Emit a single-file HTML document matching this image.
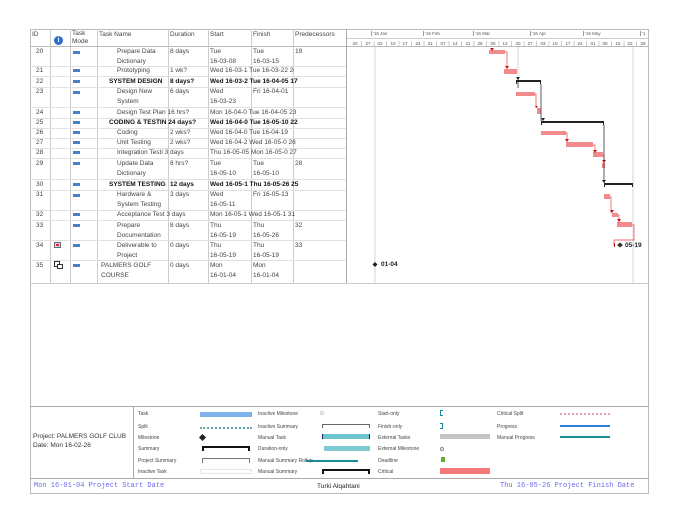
<!DOCTYPE html>
<html><head><meta charset="utf-8"><style>
*{margin:0;padding:0;box-sizing:border-box}
body{width:680px;height:525px;background:#fff;position:relative;font-family:"Liberation Sans",sans-serif;font-size:6.5px;color:#444;overflow:hidden}
.a{position:absolute}
.vl{position:absolute;width:1px;background:#ccc}
.hl{position:absolute;height:1px;background:#e0e0e0}
.t{position:absolute;line-height:10px;white-space:nowrap;overflow:hidden}
.b{font-weight:bold;color:#111}
.mode{position:absolute;width:7px;height:3px;background:#4a7fcc}
.lg{position:absolute;font-size:5px;color:#444}
</style></head><body>
<div class="a" style="left:30px;top:29px;width:619px;height:465px;border:1px solid #bbb"></div>
<div class="a" style="left:30px;top:46px;width:619px;height:1px;background:#bbb"></div>
<div class="vl" style="left:50px;top:29px;height:254px"></div>
<div class="vl" style="left:70px;top:29px;height:254px"></div>
<div class="vl" style="left:97px;top:29px;height:254px"></div>
<div class="vl" style="left:168px;top:29px;height:254px"></div>
<div class="vl" style="left:208px;top:29px;height:254px"></div>
<div class="vl" style="left:251px;top:29px;height:254px"></div>
<div class="vl" style="left:293px;top:29px;height:254px"></div>
<div class="vl" style="left:346px;top:29px;height:254px;background:#aaa"></div>
<div class="a" style="left:30px;top:283px;width:619px;height:1px;background:#ccc"></div>
<div class="t" style="left:32px;top:30px">ID</div>
<div class="a" style="left:54px;top:36px;width:9px;height:9px;border-radius:50%;background:#2a6fc9;color:#fff;font-size:7px;font-weight:bold;text-align:center;line-height:9px">i</div>
<div class="t" style="left:72px;top:30px;line-height:8px">Task<br>Mode</div>
<div class="t" style="left:99px;top:30px">Task Name</div>
<div class="t" style="left:170px;top:30px">Duration</div>
<div class="t" style="left:210px;top:30px">Start</div>
<div class="t" style="left:253px;top:30px">Finish</div>
<div class="t" style="left:295px;top:30px">Predecessors</div>

<div class="hl" style="left:30px;top:66px;width:316px"></div>
<div class="hl" style="left:30px;top:76px;width:316px"></div>
<div class="hl" style="left:30px;top:87px;width:316px"></div>
<div class="hl" style="left:30px;top:107px;width:316px"></div>
<div class="hl" style="left:30px;top:118px;width:316px"></div>
<div class="hl" style="left:30px;top:128px;width:316px"></div>
<div class="hl" style="left:30px;top:138px;width:316px"></div>
<div class="hl" style="left:30px;top:148px;width:316px"></div>
<div class="hl" style="left:30px;top:158px;width:316px"></div>
<div class="hl" style="left:30px;top:179px;width:316px"></div>
<div class="hl" style="left:30px;top:190px;width:316px"></div>
<div class="hl" style="left:30px;top:210px;width:316px"></div>
<div class="hl" style="left:30px;top:220px;width:316px"></div>
<div class="hl" style="left:30px;top:240px;width:316px"></div>
<div class="hl" style="left:30px;top:260px;width:316px"></div>

<div class="t" style="left:36px;top:47px">20</div><div class="mode" style="left:73px;top:51px"></div>
<div class="t" style="left:117px;top:47px;line-height:10px">Prepare Data<br>Dictionary</div><div class="t" style="left:170px;top:47px">8 days</div><div class="t" style="left:210px;top:47px">Tue<br>16-03-08</div><div class="t" style="left:253px;top:47px">Tue<br>16-03-15</div><div class="t" style="left:295px;top:47px">19</div>

<div class="t" style="left:36px;top:66px">21</div><div class="mode" style="left:73px;top:69px"></div>
<div class="t" style="left:117px;top:66px">Prototyping</div><div class="t" style="left:170px;top:66px">1 wk?</div><div class="t" style="left:210px;top:66px;width:84px">Wed 16-03-1 Tue 16-03-22 20</div>

<div class="t" style="left:36px;top:77px">22</div><div class="mode" style="left:73px;top:80px"></div>
<div class="t b" style="left:109px;top:77px">SYSTEM DESIGN</div><div class="t b" style="left:170px;top:77px">8 days?</div><div class="t b" style="left:210px;top:77px;width:110px">Wed 16-03-2 Tue 16-04-05 17</div>

<div class="t" style="left:36px;top:87px">23</div><div class="mode" style="left:73px;top:91px"></div>
<div class="t" style="left:117px;top:87px">Design New<br>System</div><div class="t" style="left:170px;top:87px">6 days</div><div class="t" style="left:210px;top:87px">Wed<br>16-03-23</div><div class="t" style="left:253px;top:87px">Fri 16-04-01</div>

<div class="t" style="left:36px;top:108px">24</div><div class="mode" style="left:73px;top:111px"></div>
<div class="t" style="left:117px;top:108px;width:92px">Design Test Plan 16 hrs?</div><div class="t" style="left:210px;top:108px;width:110px">Mon 16-04-0 Tue 16-04-05 23</div>

<div class="t" style="left:36px;top:118px">25</div><div class="mode" style="left:73px;top:121px"></div>
<div class="t b" style="left:109px;top:118px;width:100px">CODING &amp; TESTIN 24 days?</div><div class="t b" style="left:210px;top:118px;width:110px">Wed 16-04-0 Tue 16-05-10 22</div>

<div class="t" style="left:36px;top:128px">26</div><div class="mode" style="left:73px;top:131px"></div>
<div class="t" style="left:117px;top:128px">Coding</div><div class="t" style="left:170px;top:128px">2 wks?</div><div class="t" style="left:210px;top:128px;width:110px">Wed 16-04-0 Tue 16-04-19</div>

<div class="t" style="left:36px;top:138px">27</div><div class="mode" style="left:73px;top:141px"></div>
<div class="t" style="left:117px;top:138px">Unit Testing</div><div class="t" style="left:170px;top:138px">2 wks?</div><div class="t" style="left:210px;top:138px;width:110px">Wed 16-04-2 Wed 16-05-0 26</div>

<div class="t" style="left:36px;top:148px">28</div><div class="mode" style="left:73px;top:151px"></div>
<div class="t" style="left:117px;top:148px;width:92px">Integration Testi 3 days</div><div class="t" style="left:210px;top:148px;width:110px">Thu 16-05-05 Mon 16-05-0 27</div>

<div class="t" style="left:36px;top:159px">29</div><div class="mode" style="left:73px;top:162px"></div>
<div class="t" style="left:117px;top:159px">Update Data<br>Dictionary</div><div class="t" style="left:170px;top:159px">8 hrs?</div><div class="t" style="left:210px;top:159px">Tue<br>16-05-10</div><div class="t" style="left:253px;top:159px">Tue<br>16-05-10</div><div class="t" style="left:295px;top:159px">28</div>

<div class="t" style="left:36px;top:180px">30</div><div class="mode" style="left:73px;top:183px"></div>
<div class="t b" style="left:109px;top:180px">SYSTEM TESTING</div><div class="t b" style="left:170px;top:180px">12 days</div><div class="t b" style="left:210px;top:180px;width:110px">Wed 16-05-1 Thu 16-05-26 25</div>

<div class="t" style="left:36px;top:190px">31</div><div class="mode" style="left:73px;top:194px"></div>
<div class="t" style="left:117px;top:190px">Hardware &amp;<br>System Testing</div><div class="t" style="left:170px;top:190px">3 days</div><div class="t" style="left:210px;top:190px">Wed<br>16-05-11</div><div class="t" style="left:253px;top:190px">Fri 16-05-13</div>

<div class="t" style="left:36px;top:210px">32</div><div class="mode" style="left:73px;top:213px"></div>
<div class="t" style="left:117px;top:210px;width:92px">Acceptance Test 3 days</div><div class="t" style="left:210px;top:210px;width:110px">Mon 16-05-1 Wed 16-05-1 31</div>

<div class="t" style="left:36px;top:221px">33</div><div class="mode" style="left:73px;top:224px"></div>
<div class="t" style="left:117px;top:221px">Prepare<br>Documentation</div><div class="t" style="left:170px;top:221px">8 days</div><div class="t" style="left:210px;top:221px">Thu<br>16-05-19</div><div class="t" style="left:253px;top:221px">Thu<br>16-05-26</div><div class="t" style="left:295px;top:221px">32</div>

<div class="t" style="left:36px;top:241px">34</div><div class="a" style="left:54px;top:242px;width:7px;height:6px;border:1px solid #667;background:#dde"></div><div class="a" style="left:56px;top:244px;width:3px;height:2px;background:#d22"></div><div class="mode" style="left:73px;top:244px"></div>
<div class="t" style="left:117px;top:241px">Deliverable to<br>Project</div><div class="t" style="left:170px;top:241px">0 days</div><div class="t" style="left:210px;top:241px">Thu<br>16-05-19</div><div class="t" style="left:253px;top:241px">Thu<br>16-05-19</div><div class="t" style="left:295px;top:241px">33</div>

<div class="t" style="left:36px;top:261px">35</div><div class="a" style="left:54px;top:261px;width:6px;height:6px;border:1px solid #333"></div><div class="a" style="left:57px;top:264px;width:6px;height:5px;border:1px solid #333;background:#fff"></div><div class="mode" style="left:73px;top:264px"></div>
<div class="t" style="left:101px;top:261px">PALMERS GOLF<br>COURSE</div><div class="t" style="left:170px;top:261px">0 days</div><div class="t" style="left:210px;top:261px">Mon<br>16-01-04</div><div class="t" style="left:253px;top:261px">Mon<br>16-01-04</div>

<div class="a" style="left:347px;top:38px;width:302px;height:1px;background:#ccc"></div>
<div class="a" style="font-size:4.5px;left:371px;top:31px;border-left:1px solid #999;padding-left:1px;color:#555">'16 Jan</div>
<div class="a" style="font-size:4.5px;left:423px;top:31px;border-left:1px solid #999;padding-left:1px;color:#555">'16 Feb</div>
<div class="a" style="font-size:4.5px;left:473px;top:31px;border-left:1px solid #999;padding-left:1px;color:#555">'16 Mar</div>
<div class="a" style="font-size:4.5px;left:530px;top:31px;border-left:1px solid #999;padding-left:1px;color:#555">'16 Apr</div>
<div class="a" style="font-size:4.5px;left:583px;top:31px;border-left:1px solid #999;padding-left:1px;color:#555">'16 May</div>
<div class="a" style="font-size:4.5px;left:640px;top:31px;border-left:1px solid #999;padding-left:1px;color:#555">'1</div>
<svg class="a" style="left:347px;top:38px" width="302" height="9">
<g font-family="Liberation Sans" font-size="4.6" fill="#555" text-anchor="middle">
<text x="8" y="7">20</text><text x="21" y="7">27</text><text x="33" y="7">03</text><text x="46" y="7">10</text><text x="58" y="7">17</text><text x="71" y="7">24</text><text x="83" y="7">31</text><text x="96" y="7">07</text><text x="108" y="7">14</text><text x="121" y="7">21</text><text x="133" y="7">28</text><text x="146" y="7">06</text><text x="158" y="7">13</text><text x="171" y="7">20</text><text x="183" y="7">27</text><text x="196" y="7">03</text><text x="208" y="7">10</text><text x="221" y="7">17</text><text x="233" y="7">24</text><text x="246" y="7">01</text><text x="258" y="7">08</text><text x="271" y="7">15</text><text x="283" y="7">22</text><text x="296" y="7">29</text>
</g>
<g stroke="#aaa" stroke-width="0.6">
<line x1="14.5" y1="3" x2="14.5" y2="9"/><line x1="27" y1="3" x2="27" y2="9"/><line x1="39.5" y1="3" x2="39.5" y2="9"/><line x1="52" y1="3" x2="52" y2="9"/><line x1="64.5" y1="3" x2="64.5" y2="9"/><line x1="77" y1="3" x2="77" y2="9"/><line x1="89.5" y1="3" x2="89.5" y2="9"/><line x1="102" y1="3" x2="102" y2="9"/><line x1="114.5" y1="3" x2="114.5" y2="9"/><line x1="127" y1="3" x2="127" y2="9"/><line x1="139.5" y1="3" x2="139.5" y2="9"/><line x1="152" y1="3" x2="152" y2="9"/><line x1="164.5" y1="3" x2="164.5" y2="9"/><line x1="177" y1="3" x2="177" y2="9"/><line x1="189.5" y1="3" x2="189.5" y2="9"/><line x1="202" y1="3" x2="202" y2="9"/><line x1="214.5" y1="3" x2="214.5" y2="9"/><line x1="227" y1="3" x2="227" y2="9"/><line x1="239.5" y1="3" x2="239.5" y2="9"/><line x1="252" y1="3" x2="252" y2="9"/><line x1="264.5" y1="3" x2="264.5" y2="9"/><line x1="277" y1="3" x2="277" y2="9"/><line x1="289.5" y1="3" x2="289.5" y2="9"/>
</g></svg>

<svg class="a" style="left:0;top:0" width="680" height="300">
<g stroke="#ccc" stroke-width="0.8">
<line x1="375" y1="47" x2="375" y2="283"/><line x1="518" y1="47" x2="518" y2="76"/><line x1="633" y1="47" x2="633" y2="283"/>
</g>
<g fill="#f28b8b">
<rect x="489" y="50" width="16" height="4"/><rect x="504" y="69" width="13" height="5"/><rect x="516" y="92" width="19" height="4"/><rect x="537" y="108" width="4" height="6"/><rect x="541" y="131" width="25" height="4"/><rect x="566" y="142" width="27" height="5"/><rect x="593" y="152" width="10" height="5"/><rect x="602" y="163" width="3" height="5"/><rect x="604" y="194" width="6" height="5"/><rect x="612" y="213" width="6" height="4"/><rect x="617" y="222" width="15" height="5"/>
</g>
<g stroke="#e04040" stroke-width="0.7" fill="none">
<path d="M505 52H507V69"/><path d="M535 94H536V108"/><path d="M566 133H567V142"/><path d="M593 145H595V152"/><path d="M603 155H604V163"/><path d="M610 197H611V213"/><path d="M618 215H619V222"/><path d="M632 225H634V240H614V246"/>
</g>
<g fill="#d01010"><path d="M490 48h4l-2 3z"/><path d="M505 66h4l-2 3z"/><path d="M535 106h3l-1.5 2z"/><path d="M565 139h4l-2 3z"/><path d="M593 150h4l-2 3z"/><path d="M602 160h4l-2 3z"/><path d="M610 210h4l-2 3z"/><path d="M617 219h4l-2 3z"/><path d="M614 243v4h1v-4z"/><path d="M617 245l3-2.5 3 2.5-3 2.5z" fill="#333"/></g>
<g stroke="#333" stroke-width="0.8" fill="none">
<path d="M518 77V88"/><path d="M541 84V121"/><path d="M604 125V183"/>
</g>
<g fill="#222">
<rect x="516" y="80" width="25" height="2"/><rect x="516" y="80" width="1" height="4"/><rect x="540" y="80" width="1" height="4"/>
<rect x="541" y="121" width="63" height="2"/><rect x="541" y="121" width="1" height="4"/><rect x="603" y="121" width="1" height="4"/>
<rect x="604" y="183" width="29" height="2"/><rect x="604" y="183" width="1" height="4"/><rect x="632" y="183" width="1" height="4"/>
<path d="M516 77h4l-2 3z"/><path d="M541 118h4l-2 3z"/><path d="M602 180h4l-2 3z"/>
<path d="M375 262l2.5 2.5-2.5 2.5-2.5-2.5z"/>
</g>
<g font-family="Liberation Sans" font-size="6.5" font-weight="bold" fill="#222">
<text x="625" y="247">05-19</text><text x="381" y="266">01-04</text>
</g>
</svg>

<div class="a" style="left:30px;top:406px;width:619px;height:1px;background:#aaa"></div>
<div class="a" style="left:133px;top:406px;width:1px;height:72px;background:#aaa"></div>
<div class="a" style="left:30px;top:478px;width:619px;height:1px;background:#aaa"></div>
<div class="t" style="left:33px;top:432px;font-size:6.5px;line-height:9px;color:#333">Project: PALMERS GOLF CLUB<br>Date: Mon 16-02-26</div>
<div class="lg" style="left:138px;top:411px">Task</div>
<div class="lg" style="left:138px;top:424px">Split</div>
<div class="lg" style="left:138px;top:435px">Milestone</div>
<div class="lg" style="left:138px;top:446px">Summary</div>
<div class="lg" style="left:138px;top:458px">Project Summary</div>
<div class="lg" style="left:138px;top:469px">Inactive Task</div>
<div class="a" style="left:200px;top:412px;width:52px;height:5px;background:#7fb3ea"></div>
<div class="a" style="left:200px;top:427px;width:52px;height:2px;border-top:2px dotted #6aa"></div>
<div class="a" style="left:200px;top:435px;width:5px;height:5px;background:#222;transform:rotate(45deg)"></div>
<div class="a" style="left:202px;top:446px;width:48px;height:5px;border:2px solid #111;border-bottom:none"></div>
<div class="a" style="left:202px;top:458px;width:48px;height:5px;border:1.5px solid #777;border-bottom:none"></div>
<div class="a" style="left:200px;top:469px;width:52px;height:5px;border:1px solid #e6e6e6"></div>
<div class="lg" style="left:258px;top:411px">Inactive Milestone</div>
<div class="lg" style="left:258px;top:424px">Inactive Summary</div>
<div class="lg" style="left:258px;top:435px">Manual Task</div>
<div class="lg" style="left:258px;top:446px">Duration-only</div>
<div class="lg" style="left:258px;top:458px">Manual Summary Rollup</div>
<div class="lg" style="left:258px;top:469px">Manual Summary</div>
<div class="a" style="left:320px;top:411px;width:4px;height:4px;border:1px solid #ccc;border-radius:50%"></div>
<div class="a" style="left:322px;top:424px;width:48px;height:4px;border:1px solid #666;border-bottom:none"></div>
<div class="a" style="left:322px;top:434px;width:48px;height:5px;background:#6cc5cf;border-left:1px solid #127;border-right:1px solid #127"></div>
<div class="a" style="left:324px;top:446px;width:46px;height:5px;background:#7dcad3"></div>
<div class="a" style="left:306px;top:460px;width:52px;height:2px;background:#1a8a9a"></div>
<div class="a" style="left:322px;top:469px;width:48px;height:5px;border:2px solid #111;border-bottom:none"></div>
<div class="lg" style="left:378px;top:411px">Start-only</div>
<div class="lg" style="left:378px;top:424px">Finish-only</div>
<div class="lg" style="left:378px;top:435px">External Tasks</div>
<div class="lg" style="left:378px;top:446px">External Milestone</div>
<div class="lg" style="left:378px;top:458px">Deadline</div>
<div class="lg" style="left:378px;top:469px">Critical</div>
<div class="a" style="left:440px;top:410px;width:3px;height:6px;border:1px solid #1a8a9a;border-right:none"></div>
<div class="a" style="left:440px;top:423px;width:3px;height:6px;border:1px solid #1a8a9a;border-left:none"></div>
<div class="a" style="left:440px;top:434px;width:50px;height:5px;background:#c4c4c4"></div>
<div class="a" style="left:440px;top:447px;width:4px;height:4px;border:1px solid #888;border-radius:50%"></div>
<div class="a" style="left:441px;top:457px;width:4px;height:5px;background:#6a3"></div>
<div class="a" style="left:440px;top:468px;width:50px;height:6px;background:#f47a7a"></div>
<div class="lg" style="left:497px;top:411px">Critical Split</div>
<div class="lg" style="left:497px;top:424px">Progress</div>
<div class="lg" style="left:497px;top:435px">Manual Progress</div>
<div class="a" style="left:560px;top:413px;width:50px;height:2px;border-top:2px dotted #e8a0b8"></div>
<div class="a" style="left:560px;top:425px;width:50px;height:2px;background:#2f7fd6"></div>
<div class="a" style="left:560px;top:436px;width:50px;height:2px;background:#1a8a9a"></div>
<div class="t" style="left:34px;top:481px;font-family:'Liberation Mono',monospace;font-size:7px;color:#6a6af0">Mon 16-01-04 Project Start Date</div>
<div class="t" style="left:317px;top:482px;font-size:6.5px;color:#222">Turki Alqahtani</div>
<div class="t" style="left:500px;top:481px;font-family:'Liberation Mono',monospace;font-size:7px;color:#6a6af0">Thu 16-05-26 Project Finish Date</div>
</body></html>
